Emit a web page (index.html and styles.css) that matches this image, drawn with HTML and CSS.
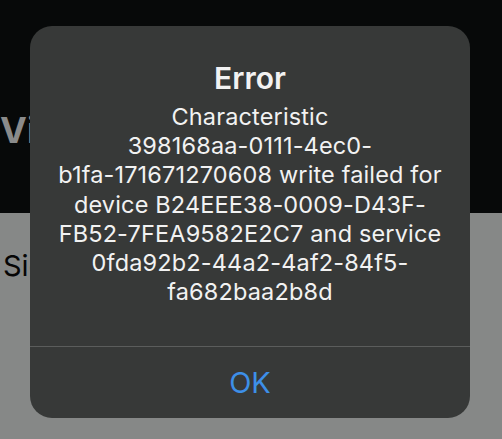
FILE: index.html
```html
<!DOCTYPE html>
<html>
<head>
<meta charset="utf-8">
<link rel="stylesheet" href="styles.css">
</head>
<body>
<div class="screen">
  <header class="top">
    <h1 class="big-title">View</h1>
  </header>
  <main class="bottom">
    <div class="row-label">Signal</div>
  </main>
  <div class="alert" role="alertdialog">
    <div class="alert-body">
      <div class="alert-title">Error</div>
      <div class="alert-message">Characteristic<br>398168aa-0111-4ec0-<br>b1fa-171671270608 write failed for<br>device B24EEE38-0009-D43F-<br>FB52-7FEA9582E2C7 and service<br>0fda92b2-44a2-4af2-84f5-<br>fa682baa2b8d</div>
    </div>
    <div class="alert-actions">
      <button class="alert-button">OK</button>
    </div>
  </div>
</div>
</body>
</html>
```

FILE: styles.css
```css
html, body {
  margin: 0;
  padding: 0;
}
body {
  width: 502px;
  height: 439px;
  overflow: hidden;
  font-family: Inter, "Open Sans", "Liberation Sans", sans-serif;
}
.screen {
  position: relative;
  width: 502px;
  height: 439px;
  display: flex;
  flex-direction: column;
}
.top {
  height: 213px;
  background: #070909;
  display: flex;
  align-items: flex-start;
}
.big-title {
  margin: 108px 0 0 0;
  font-size: 36px;
  line-height: 44px;
  font-weight: 700;
  color: #8a8b8b;
}
.bottom {
  flex: 1;
  background: #868887;
}
.row-label {
  margin: 35px 0 0 3px;
  font-size: 29px;
  line-height: 36px;
  color: #060606;
}
.alert {
  position: absolute;
  left: 30px;
  top: 26px;
  width: 440px;
  height: 392px;
  border-radius: 22px;
  background: #373938;
  display: flex;
  flex-direction: column;
  overflow: hidden;
}
.alert-body {
  height: 320px;
  box-sizing: border-box;
  padding: 35px 12px 0;
  display: flex;
  flex-direction: column;
  align-items: center;
  gap: 7px;
  text-align: center;
  color: #f2f2f2;
}
.alert-title {
  font-size: 30px;
  line-height: 34px;
  font-weight: 600;
}
.alert-message {
  font-size: 23.5px;
  line-height: 29.2px;
  font-weight: 400;
  letter-spacing: 0.15px;
}
.alert-actions {
  flex: 1;
  border-top: 1px solid #5b5d5c;
  display: flex;
}
.alert-button {
  flex: 1;
  border: 0;
  background: transparent;
  font-family: inherit;
  font-size: 29px;
  color: #3d8fe8;
  padding: 0;
}
```
